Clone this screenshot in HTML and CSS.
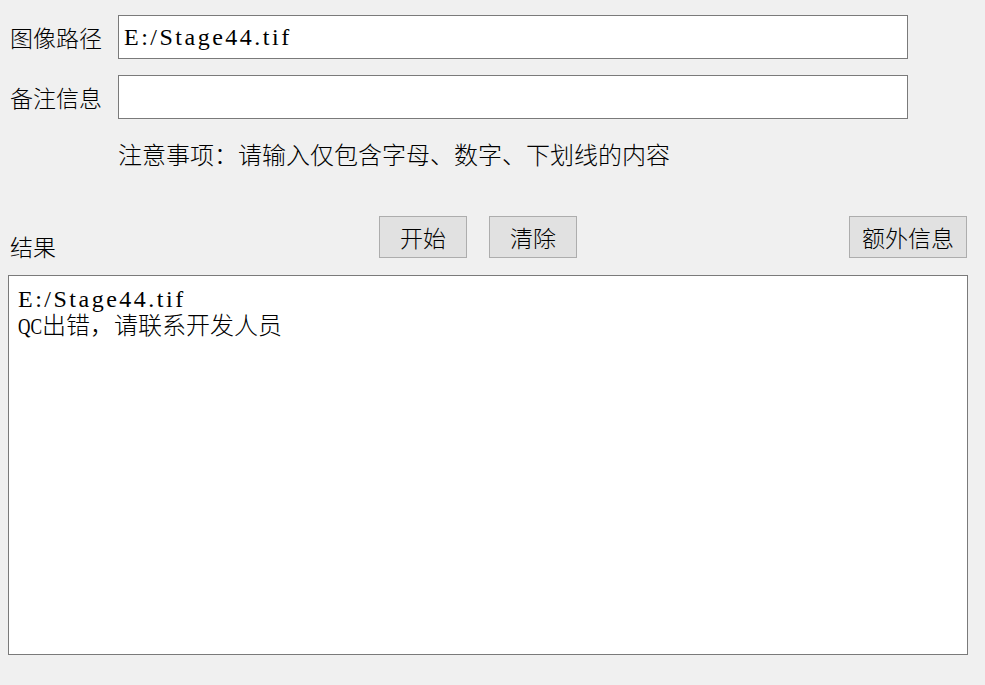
FILE: index.html
```html
<!DOCTYPE html>
<html lang="zh-CN">
<head>
<meta charset="utf-8">
<title>QC</title>
<link rel="stylesheet" href="styles.css">
</head>
<body>
<div class="app">
  <div class="row">
    <label class="lbl">图像路径</label>
    <input class="field" type="text" value="E:/Stage44.tif">
  </div>
  <div class="row row2">
    <label class="lbl">备注信息</label>
    <input class="field" type="text" value="">
  </div>
  <p class="note">注意事项：请输入仅包含字母、数字、下划线的内容</p>
  <div class="actions">
    <span class="result">结果</span>
    <button class="btn">开始</button>
    <button class="btn btn2">清除</button>
    <span class="spacer"></span>
    <button class="btn wide">额外信息</button>
  </div>
  <div class="output">
    <div class="line"><span class="mono">E:/Stage44.tif</span></div>
    <div class="line"><span class="qc">QC</span>出错，请联系开发人员</div>
  </div>
</div>
</body>
</html>
```

FILE: styles.css
```css
html, body {
  margin: 0;
  padding: 0;
  background: #f0f0f0;
}
body {
  width: 985px;
  height: 685px;
  overflow: hidden;
  font-family: "Noto Sans CJK SC", "Noto Sans", sans-serif;
  font-weight: 300;
  color: #000;
}
.app {
  padding-top: 15px;
}
.row {
  display: flex;
  align-items: center;
  height: 44px;
}
.row2 {
  margin-top: 16px;
}
.lbl {
  box-sizing: border-box;
  width: 118px;
  padding-left: 10px;
  font-size: 23px;
  line-height: 24px;
}
.field {
  box-sizing: border-box;
  width: 790px;
  height: 44px;
  margin: 0;
  border: 1px solid #7a7a7a;
  background: #fff;
  padding: 0 0 0 5px;
  font-family: "Liberation Serif", "Noto Sans CJK SC", serif;
  font-size: 24px;
  letter-spacing: 2.5px;
  color: #000;
  outline: none;
}
.note {
  margin: 23px 0 0 118px;
  font-size: 24px;
  line-height: 24px;
}
.actions {
  display: flex;
  height: 42px;
  margin-top: 50px;
  padding: 0 18px 0 10px;
}
.result {
  width: 369px;
  align-self: flex-end;
  font-size: 23px;
  line-height: 24px;
}
.btn {
  box-sizing: border-box;
  width: 88px;
  height: 42px;
  margin: 0;
  padding: 0;
  border: 1px solid #adadad;
  background: #e1e1e1;
  font-family: "Noto Sans CJK SC", sans-serif;
  font-weight: 300;
  font-size: 23px;
  line-height: 24px;
  color: #000;
}
.btn2 {
  margin-left: 22px;
}
.spacer {
  flex: 1;
}
.wide {
  width: 118px;
}
.output {
  box-sizing: border-box;
  width: 960px;
  height: 380px;
  margin: 17px 0 0 8px;
  border: 1px solid #7a7a7a;
  background: #fff;
  padding: 10px 9px;
  font-family: "Liberation Serif", "Noto Sans CJK SC", serif;
  font-size: 24px;
  line-height: 27px;
}
.line {
  height: 27px;
  white-space: nowrap;
}
.mono {
  letter-spacing: 2.5px;
}
.qc {
  display: inline-block;
  width: 24px;
  transform: scaleX(0.72);
  transform-origin: 0 0;
}
```
